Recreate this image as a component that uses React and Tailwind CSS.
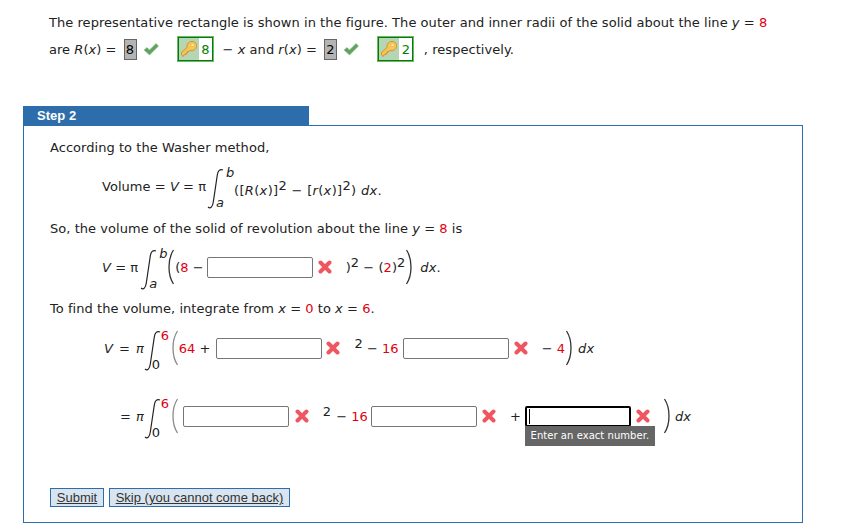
import React from 'react';

const Check = () => (
  <svg width="16" height="14" viewBox="0 0 16 14" className="shrink-0">
    <path d="M1 8 L4 5.5 L6.5 8 L13 1.5 L15.5 4 L6.5 13 Z" fill="#5fa35f" stroke="#8fbf8f" strokeWidth="0.6" />
  </svg>
);

const Cross = () => (
  <svg width="14" height="14" viewBox="0 0 14 14" className="shrink-0">
    <path d="M2.5 2.5 L11.5 11.5 M11.5 2.5 L2.5 11.5" stroke="#f0565f" strokeWidth="4" strokeLinecap="round" />
  </svg>
);

const Key = () => (
  <svg width="18" height="18" viewBox="0 0 18 18" className="shrink-0">
    <path d="M1.5 14.5 L1.5 12.5 L7 7.5 C6.5 4 9 1.5 12 1.5 C15 1.5 17 3.5 16.5 6.5 C16 9.5 13 11.5 10 10.5 L8.8 11.5 L7.5 11.5 L7.5 13 L6 13 L6 14.5 L4.5 14.5 L3 16.5 Z" fill="#f5c656" stroke="#d08c1e" strokeWidth="0.9" strokeLinejoin="round" />
    <ellipse cx="12.5" cy="5" rx="1.6" ry="1.3" fill="#fff1c0" stroke="#e0aa40" strokeWidth="0.5" />
  </svg>
);

const Answer = ({ value }) => (
  <span className="inline-flex h-[24px] w-[35px] border border-[#008000] outline outline-[#6fb56f]">
    <span className="flex w-[20px] items-center justify-center bg-[#b5d5b5]"><Key /></span>
    <span className="flex flex-1 items-center justify-center pl-px text-[#008000]">{value}</span>
  </span>
);

const Given = ({ value }) => (
  <span className="flex h-[21px] w-[13px] items-center justify-center border border-[#666] bg-[#b4b4b4] text-black">{value}</span>
);

const Input = ({ active }) => (
  <span className={active
    ? 'flex h-[21px] w-[106px] shrink-0 items-center rounded-[2px] border-2 border-black bg-white pl-[2px]'
    : 'block h-[21px] w-[106px] shrink-0 rounded-[2px] border border-[#767676] bg-white'}>
    {active && <span className="h-[15px] w-px bg-black" />}
  </span>
);

const Red = ({ children }) => <span className="text-[#e0000f]">{children}</span>;
const I = ({ children }) => <i className="font-normal">{children}</i>;

const Integral = ({ top, bottom, red }) => (
  <span className="relative block h-[48px] w-[26px] shrink-0">
    <svg width="26" height="48" viewBox="0 0 26 48" className="block">
      <path d="M16 8 C13 6.5 10.8 9 10.3 13 L6.3 40 C5.6 45 3.5 47 1 45" fill="none" stroke="#222" strokeWidth="1.2" />
    </svg>
    <span className={red ? 'absolute left-[17px] top-[5px] text-[#e0000f]' : 'absolute left-[19px] top-[4px] italic'}>{top}</span>
    <span className={red ? 'absolute left-[8px] top-[34px]' : 'absolute left-[9px] top-[34px] italic'}>{bottom}</span>
  </span>
);

const Paren = ({ right, dark }) => (
  <svg width="9" height="36" viewBox="0 0 9 36" className="shrink-0">
    <path d={right ? 'M1.5 1 C7.5 10 7.5 26 1.5 35' : 'M7.5 1 C1.5 10 1.5 26 7.5 35'} fill="none" stroke={dark ? '#333' : '#8a8a8a'} strokeWidth="1.3" />
  </svg>
);

const Sup = ({ children }) => <sup className="top-[-5px] text-[13px] leading-none">{children}</sup>;

export default function App() {
  return (
    <div className="h-[530px] w-[858px] overflow-hidden bg-white text-[13px] leading-none tracking-[0.045px] text-[#222] [font-family:'DejaVu_Sans',sans-serif]">
      <div className="pl-[49px] pt-[16px]">
        <p className="h-[15px]">
          The representative rectangle is shown in the figure. The outer and inner radii of the solid about the line <I>y</I> = <Red>8</Red>
        </p>
        <div className="mt-[5px] flex h-[26px] items-center">
          <span>are <I>R</I>(<I>x</I>) =</span>
          <span className="ml-[7px]"><Given value="8" /></span>
          <span className="ml-[6px]"><Check /></span>
          <span className="ml-[19px] flex"><Answer value="8" /></span>
          <span className="ml-[10px]">− <I>x</I> and <I>r</I>(<I>x</I>) =</span>
          <span className="ml-[7px]"><Given value="2" /></span>
          <span className="ml-[6px]"><Check /></span>
          <span className="ml-[19px] flex"><Answer value="2" /></span>
          <span className="ml-[11px]">, respectively.</span>
        </div>
      </div>

      <div className="ml-[23px] mt-[44px] w-[780px]">
        <div className="flex h-[19px] w-[286px] items-center bg-[#2e6dab] pl-[14px] font-bold text-white [font-family:'Liberation_Sans',sans-serif]">
          Step 2
        </div>
        <div className="h-[398px] border border-[#2e6dab] pl-[26px] pt-[15px]">
          <p className="h-[15px]">According to the Washer method,</p>

          <div className="mt-[6px] flex h-[48px] items-center pl-[52px]">
            <span>Volume = <I>V</I> = π</span>
            <span className="ml-[1px]"><Integral top="b" bottom="a" /></span>
            <span className="ml-[1px] mt-[8px] tracking-[0.32px]">
              ([<I>R</I>(<I>x</I>)]<Sup>2</Sup> − [<I>r</I>(<I>x</I>)]<Sup>2</Sup>) <I>dx</I>.
            </span>
          </div>

          <p className="mt-[12px] h-[15px]">So, the volume of the solid of revolution about the line <I>y</I> = <Red>8</Red> is</p>

          <div className="mt-[6px] flex h-[48px] items-center pl-[52px]">
            <span><I>V</I> = π</span>
            <span className="ml-[2px]"><Integral top="b" bottom="a" /></span>
            <Paren dark />
            <span>(<Red>8</Red> −</span>
            <span className="ml-[3px]"><Input /></span>
            <span className="ml-[5px]"><Cross /></span>
            <span className="ml-[14px]">)<Sup>2</Sup> − (<Red>2</Red>)<Sup>2</Sup></span>
            <Paren right dark />
            <span className="ml-[6px]"><I>dx</I>.</span>
          </div>

          <p className="mt-[11px] h-[15px]">To find the volume, integrate from <I>x</I> = <Red>0</Red> to <I>x</I> = <Red>6</Red>.</p>

          <div className="mt-[7px] flex h-[48px] items-center pl-[54px]">
            <I>V</I>
            <span className="ml-[6px]">=</span>
            <span className="ml-[6px] italic">π</span>
            <Integral top="6" bottom="0" red />
            <Paren />
            <span><Red>64</Red> +</span>
            <span className="ml-[5px]"><Input /></span>
            <span className="ml-[4px]"><Cross /></span>
            <span className="relative top-[-5px] ml-[15px]">2</span>
            <span className="ml-[4px]">− <Red>16</Red></span>
            <span className="ml-[4px]"><Input /></span>
            <span className="ml-[5px]"><Cross /></span>
            <span className="ml-[14px]">− <Red>4</Red></span>
            <Paren right dark />
            <span className="ml-[4px]"><I>dx</I></span>
          </div>

          <div className="mt-[20px] flex h-[48px] items-center pl-[70px]">
            <span>=</span>
            <span className="ml-[5px] italic">π</span>
            <Integral top="6" bottom="0" red />
            <Paren />
            <span className="ml-[4px]"><Input /></span>
            <span className="ml-[6px]"><Cross /></span>
            <span className="relative top-[-5px] ml-[14px]">2</span>
            <span className="ml-[5px]">− <Red>16</Red></span>
            <span className="ml-[3px]"><Input /></span>
            <span className="ml-[5px]"><Cross /></span>
            <span className="ml-[14px]">+</span>
            <span className="relative ml-[4px]">
              <Input active />
              <span className="absolute left-0 top-[20px] flex h-[20px] w-[130px] items-center justify-center bg-[#666] text-[10px] whitespace-nowrap text-white">Enter an exact number.</span>
            </span>
            <span className="ml-[5px]"><Cross /></span>
            <span className="ml-[13px]"><Paren right dark /></span>
            <span className="ml-[3px]"><I>dx</I></span>
          </div>

          <div className="mt-[48px] flex gap-[5px] text-[13px] tracking-normal text-[#333] [font-family:'Liberation_Sans',sans-serif]">
            <button className="h-[19px] w-[54px] border border-[#2e6dab] bg-[#d8e4f0] underline">Submit</button>
            <button className="h-[19px] w-[181px] whitespace-nowrap border border-[#2e6dab] bg-[#d8e4f0] underline">Skip (you cannot come back)</button>
          </div>
        </div>
      </div>
    </div>
  );
}
